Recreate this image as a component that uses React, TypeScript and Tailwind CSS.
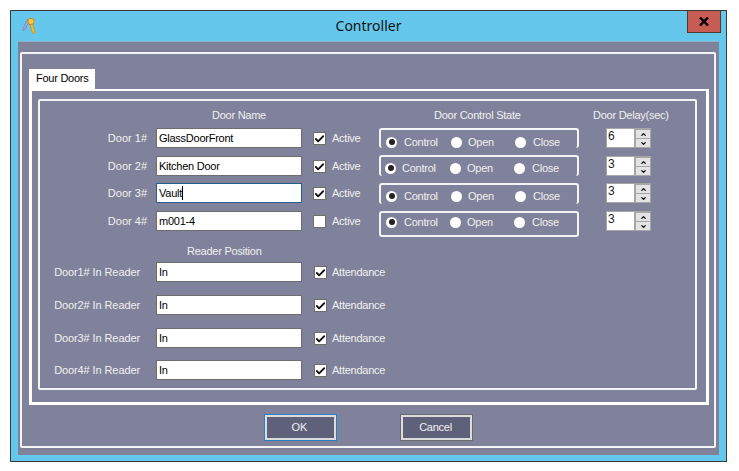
import { ChevronDown, ChevronUp, Check } from "lucide-react";

const doors = [
  { label: "Door 1#", name: "GlassDoorFront", active: true, delay: "6", rowClass: "mt-[6px]", boxClass: "h-[20px] border-b-0", cursor: false, radioClass: "pl-[5px] pt-[5px]", cols: ["ml-[7px] w-[47px]", "ml-[6px] w-[47px]", "ml-[7px]"] },
  { label: "Door 2#", name: "Kitchen Door", active: true, delay: "3", rowClass: "mt-[8px]", boxClass: "h-[21px] -mt-px border-b-0", cursor: false, radioClass: "pl-[4px] pt-[4px]", cols: ["ml-[6px] w-[48px]", "ml-[6px] w-[47px]", "ml-[7px]"] },
  { label: "Door 3#", name: "Vault", active: true, delay: "3", rowClass: "mt-[7px]", boxClass: "h-[21px] border-b-0", cursor: true, radioClass: "pl-[5px] pt-[4px]", cols: ["ml-[7px] w-[47px]", "ml-[6px] w-[47px]", "ml-[7px]"] },
  { label: "Door 4#", name: "m001-4", active: false, delay: "3", rowClass: "mt-[8px]", boxClass: "h-[26px]", cursor: false, radioClass: "pl-[5px] pt-[2px]", cols: ["ml-[7px] w-[46px]", "ml-[6px] w-[47px]", "ml-[7px]"] },
];

const readers = [
  { label: "Door1# In Reader", rowClass: "mt-[4px]" },
  { label: "Door2# In Reader", rowClass: "mt-[13px]" },
  { label: "Door3# In Reader", rowClass: "mt-[13px]" },
  { label: "Door4# In Reader", rowClass: "mt-[12px]" },
];

function CheckBox({ checked }: { checked: boolean }) {
  return (
    <div className="w-[13px] h-[13px] bg-white border border-[#6d6d6d] flex items-center justify-center shrink-0">
      {checked && <Check className="w-[12px] h-[12px] text-[#111]" strokeWidth={4} />}
    </div>
  );
}

function Radio({ checked }: { checked?: boolean }) {
  return (
    <div className="w-[11px] h-[11px] rounded-full bg-white flex items-center justify-center shrink-0">
      {checked && <div className="w-[6px] h-[6px] rounded-full bg-[#222]" />}
    </div>
  );
}

function Field({ value, cursor, focused }: { value: string; cursor?: boolean; focused?: boolean }) {
  return (
    <div className={`w-[146px] h-[20px] bg-white border pl-[2px] text-black flex items-center shrink-0 ${focused ? "border-[#24608f]" : "border-[#6d6d6d]"}`}>
      {value}
      {cursor && <span className="w-px h-[14px] bg-black" />}
    </div>
  );
}

function Spinner({ value }: { value: string }) {
  return (
    <div className="w-[45px] h-[20px] bg-[#a6a6a6] p-px flex gap-[2px]">
      <div className="w-[27px] bg-white text-[#222] text-[12px] leading-[15px] pl-px">{value}</div>
      <div className="flex flex-col gap-px w-[14px] pt-px">
        <div className="h-[8px] bg-[#e3e3e3] flex items-center justify-center">
          <ChevronUp className="w-[7px] h-[7px] text-black" strokeWidth={4} />
        </div>
        <div className="h-[8px] bg-[#e3e3e3] flex items-center justify-center">
          <ChevronDown className="w-[7px] h-[7px] text-black" strokeWidth={4} />
        </div>
      </div>
    </div>
  );
}

function KeysIcon() {
  return (
    <svg width="14" height="18" viewBox="0 0 14 18" className="block">
      <path d="M5.5 2.5 L7.5 3.5 L3 12.5 L1.2 14 L0.8 12 Z" fill="#a9a8de" stroke="#7573b4" strokeWidth="0.6" />
      <circle cx="9" cy="4.5" r="3.2" fill="#f6c94a" stroke="#b98a14" strokeWidth="1" />
      <path d="M8 7.5 L10.5 16.5 L13 16 L12.4 14.5 L13 13.5 L12.2 12 L10.6 7 Z" fill="#f4b92f" stroke="#b98a14" strokeWidth="0.6" />
    </svg>
  );
}

export default function App() {
  return (
    <div className="w-[739px] h-[471px] bg-white font-['Liberation_Sans',Arial,sans-serif] p-[10px] overflow-hidden">
      <div className="w-[717px] h-[452px] border border-[#3a3a3a] bg-[#65c7ec] flex flex-col">
        {/* title bar */}
        <div className="h-[30px] grid grid-cols-[1fr_auto_1fr] shrink-0">
          <div className="pl-[11px] pt-[6px]">
            <KeysIcon />
          </div>
          <div className="font-['Noto_Sans',sans-serif] text-[14px] leading-[30px] text-[#111]">Controller</div>
          <div className="flex justify-end pr-[5px]">
            <div className="w-[34px] h-[22px] bg-[#c75c52] border border-[#4f3a3a] border-t-0 flex items-center justify-center text-black">
              <svg width="10" height="9" viewBox="0 0 10 9">
                <path d="M1 0.5 L9 8.5 M9 0.5 L1 8.5" stroke="#000" strokeWidth="2.4" />
              </svg>
            </div>
          </div>
        </div>

        {/* client area */}
        <div className="ml-[7px] w-[701px] h-[414px] bg-[#80829b] border-t border-[#8fb2cc] pt-[10px] pl-[2px] text-[11px] tracking-[-0.25px]">
          <div className="w-[696px] h-[396px] border-2 border-[#f4f4f4] rounded-[2px] pt-[15px] pl-[7px]">
            {/* tab */}
            <div className="w-[66px] h-[21px] bg-white text-black leading-[18px] pl-[7px] whitespace-nowrap">Four Doors</div>
            <div className="w-[680px] h-[316px] -mt-px border-[3px] border-t-2 border-white pt-[8px] pl-[6px]">
              <div className="w-[659px] h-[291px] border-2 border-[#f4f4f4] rounded-[2px] leading-[14px] text-[#f0f0f0] whitespace-nowrap">
                {/* headers */}
                <div className="flex mt-[7px] h-[14px]">
                  <div className="ml-[172px] w-[58px]">Door Name</div>
                  <div className="ml-[164px] w-[120px]">Door Control State</div>
                  <div className="ml-[39px]">Door Delay(sec)</div>
                </div>

                {doors.map((d) => (
                  <div key={d.label} className={`flex h-[20px] ${d.rowClass}`}>
                    <div className="w-[107px] text-right leading-[20px] shrink-0 tracking-normal">{d.label}</div>
                    <div className="ml-[9px]">
                      <Field value={d.name} cursor={d.cursor} focused={d.cursor} />
                    </div>
                    <div className="ml-[11px] mt-[4px]">
                      <CheckBox checked={d.active} />
                    </div>
                    <div className="ml-[6px] w-[47px] leading-[20px] shrink-0">Active</div>
                    <div className={`w-[200px] shrink-0 border-2 border-[#f4f4f4] rounded-[3px] ${d.boxClass}`}>
                      <div className={`flex items-center ${d.radioClass}`}>
                        <Radio checked />
                        <span className={d.cols[0]}>Control</span>
                        <Radio />
                        <span className={d.cols[1]}>Open</span>
                        <Radio />
                        <span className={d.cols[2]}>Close</span>
                      </div>
                    </div>
                    <div className="ml-[27px]">
                      <Spinner value={d.delay} />
                    </div>
                  </div>
                ))}

                <div className="mt-[13px] ml-[147px] h-[14px]">Reader Position</div>

                {readers.map((r) => (
                  <div key={r.label} className={`flex h-[20px] ${r.rowClass}`}>
                    <div className="w-[100px] text-right leading-[20px] shrink-0 tracking-[-0.1px]">{r.label}</div>
                    <div className="ml-[16px]">
                      <Field value="In" />
                    </div>
                    <div className="ml-[12px] mt-[4px]">
                      <CheckBox checked />
                    </div>
                    <div className="ml-[5px] leading-[20px]">Attendance</div>
                  </div>
                ))}
              </div>
            </div>

            {/* buttons */}
            <div className="flex mt-[9px] ml-[235px] gap-[63px]">
              <div className="w-[73px] h-[27px] border border-[#2a7fc0] bg-[#5f6079]">
                <div className="w-full h-full border-2 border-[#dcdcdc] text-center leading-[21px] text-[#f0f0f0] pr-[2px] tracking-normal">OK</div>
              </div>
              <div className="w-[73px] h-[27px] border border-[#6a6a6a] bg-[#5f6079]">
                <div className="w-full h-full border-2 border-[#dcdcdc] text-center leading-[21px] text-[#f0f0f0] pr-[2px]">Cancel</div>
              </div>
            </div>
          </div>
        </div>
      </div>
    </div>
  );
}
